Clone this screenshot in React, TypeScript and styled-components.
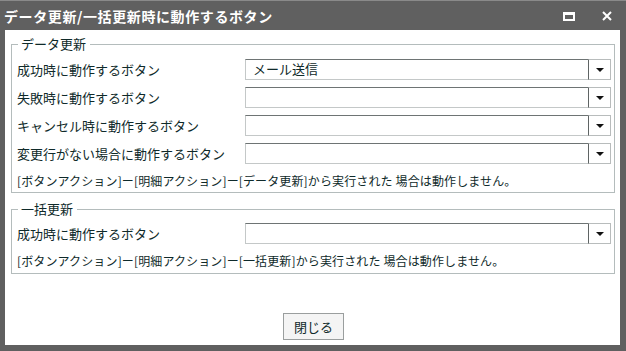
import styled, { createGlobalStyle } from 'styled-components';

const GlobalStyle = createGlobalStyle`
  html, body {
    margin: 0;
    padding: 0;
    background: #ffffff;
  }
  body {
    font-family: "Noto Sans CJK JP", "Noto Sans", sans-serif;
    color: #0f2a2a;
  }
`;

const dataRows = [
  { label: '成功時に動作するボタン', value: 'メール送信' },
  { label: '失敗時に動作するボタン', value: '' },
  { label: 'キャンセル時に動作するボタン', value: '' },
  { label: '変更行がない場合に動作するボタン', value: '' },
];

const bulkRows = [{ label: '成功時に動作するボタン', value: '' }];

export default function App() {
  return (
    <>
      <GlobalStyle />
      <Window>
        <TitleBar>
          <Title>データ更新/一括更新時に動作するボタン</Title>
          <TitleButtons>
            <MaxIcon />
            <CloseIcon viewBox="0 0 10 10">
              <path d="M1 1 L9 9 M9 1 L1 9" stroke="#ffffff" strokeWidth="2" />
            </CloseIcon>
          </TitleButtons>
        </TitleBar>
        <Body>
          <Group>
            <Legend>データ更新</Legend>
            <Rows $top={7}>
              {dataRows.map((r) => (
                <Row key={r.label}>
                  <Label>{r.label}</Label>
                  <Select value={r.value} />
                </Row>
              ))}
            </Rows>
            <Note>[ボタンアクション]ー[明細アクション]ー[データ更新]から実行された 場合は動作しません。</Note>
          </Group>
          <Group $second>
            <Legend>一括更新</Legend>
            <Rows $top={6}>
              {bulkRows.map((r) => (
                <Row key={r.label}>
                  <Label>{r.label}</Label>
                  <Select value={r.value} />
                </Row>
              ))}
            </Rows>
            <Note>[ボタンアクション]ー[明細アクション]ー[一括更新]から実行された 場合は動作しません。</Note>
          </Group>
          <Footer>
            <CloseButton>閉じる</CloseButton>
          </Footer>
        </Body>
      </Window>
    </>
  );
}

function Select({ value }: { value: string }) {
  return (
    <SelectBox>
      <SelectField>{value}</SelectField>
      <SelectArrow>
        <svg width="8" height="4" viewBox="0 0 8 4">
          <path d="M0 0 H8 L4 4 Z" fill="#111" />
        </svg>
      </SelectArrow>
    </SelectBox>
  );
}

const Window = styled.div`
  width: 626px;
  height: 351px;
  box-sizing: border-box;
  background: #606060;
  border-top: 1px solid #8a8a8a;
  padding: 0 6px 6px 5px;
  display: flex;
  flex-direction: column;
`;

const TitleBar = styled.div`
  height: 29px;
  display: flex;
  align-items: center;
  justify-content: space-between;
`;

const Title = styled.div`
  color: #ffffff;
  font-size: 14px;
  font-weight: bold;
  letter-spacing: 0.6px;
  margin-left: -1px;
`;

const TitleButtons = styled.div`
  display: flex;
  align-items: center;
  gap: 27px;
  margin-right: 8px;
  margin-top: 1px;
`;

const MaxIcon = styled.div`
  width: 12px;
  height: 9px;
  box-sizing: border-box;
  border: 2px solid #ffffff;
  border-top-width: 3px;
`;

const CloseIcon = styled.svg`
  width: 10px;
  height: 10px;
`;

const Body = styled.div`
  flex: 1;
  background: #ffffff;
  display: flex;
  flex-direction: column;
  padding: 6px 5px 5px 6px;
`;

const Group = styled.fieldset<{ $second?: boolean }>`
  margin: ${(p) => (p.$second ? '8px' : '0')} 0 0 0;
  padding: 0 3px ${(p) => (p.$second ? '4px' : '3px')} 5px;
  border: 1px solid #b4bcbc;
  min-width: 0;
`;

const Legend = styled.legend`
  font-size: 13px;
  line-height: 16px;
  padding: 0 4px 0 3px;
  margin-left: 1px;
  color: #0f2a2a;
`;

const Rows = styled.div<{ $top: number }>`
  display: flex;
  flex-direction: column;
  gap: 7px;
  padding-top: ${(p) => p.$top}px;
`;

const Row = styled.div`
  display: grid;
  grid-template-columns: 228px 1fr;
  align-items: center;
  height: 21px;
`;

const Label = styled.div`
  font-size: 13px;
  line-height: 16px;
  white-space: nowrap;
`;

const SelectBox = styled.div`
  display: flex;
  height: 21px;
`;

const SelectField = styled.div`
  flex: 1;
  box-sizing: border-box;
  border: 1px solid #c4c8c8;
  border-top-color: #6e7474;
  border-right: none;
  font-size: 13px;
  line-height: 18px;
  padding-left: 7px;
  color: #0f2a2a;
`;

const SelectArrow = styled.div`
  width: 23px;
  box-sizing: border-box;
  border: 1px solid #b8bcbc;
  border-left-color: #5f6464;
  display: flex;
  align-items: center;
  justify-content: center;
  background: #ffffff;
`;

const Note = styled.div`
  font-size: 12px;
  line-height: 16px;
  letter-spacing: 0.13px;
  margin-top: 9px;
  white-space: nowrap;
`;

const Footer = styled.div`
  margin-top: auto;
  display: flex;
  justify-content: center;
`;

const CloseButton = styled.button`
  width: 61px;
  height: 27px;
  box-sizing: border-box;
  border: 1px solid #9a9e9e;
  background: #f4f4f4;
  font-family: "Noto Sans CJK JP", sans-serif;
  font-size: 13px;
  color: #0f2a2a;
  padding: 0;
  margin-left: 1px;
`;
